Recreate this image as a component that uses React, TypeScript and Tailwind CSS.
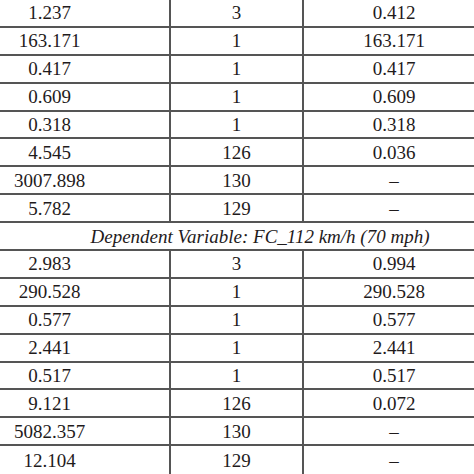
import React from 'react';

type Row = [string, string, string];

const first: Row[] = [
  ['1.237', '3', '0.412'],
  ['163.171', '1', '163.171'],
  ['0.417', '1', '0.417'],
  ['0.609', '1', '0.609'],
  ['0.318', '1', '0.318'],
  ['4.545', '126', '0.036'],
  ['3007.898', '130', '–'],
  ['5.782', '129', '–'],
];

const second: Row[] = [
  ['2.983', '3', '0.994'],
  ['290.528', '1', '290.528'],
  ['0.577', '1', '0.577'],
  ['2.441', '1', '2.441'],
  ['0.517', '1', '0.517'],
  ['9.121', '126', '0.072'],
  ['5082.357', '130', '–'],
  ['12.104', '129', '–'],
];

const DataRow = ({ row, last }: { row: Row; last?: boolean }) => (
  <div
    className={`grid grid-cols-[169px_133px_172px] h-[27.9px] ${last ? '' : 'border-b-2 border-[#555]'}`}
  >
    <div className="flex items-center justify-center pr-[70px]">{row[0]}</div>
    <div className="flex items-center justify-center border-l-2 border-[#555]">{row[1]}</div>
    <div className="flex items-center justify-center pl-[10px] border-l-2 border-[#555]">{row[2]}</div>
  </div>
);

const App = () => {
  return (
    <div
      className="w-[474px] h-[474px] overflow-hidden bg-white text-[#1f1b1c] text-[19px] leading-none"
      style={{ fontFamily: '"Liberation Serif", "DejaVu Serif", serif' }}
    >
      {first.map((r, i) => (
        <DataRow key={`a${i}`} row={r} />
      ))}
      <div className="h-[27.9px] flex items-center justify-center pl-[46px] border-b-2 border-[#555] italic">
        Dependent Variable: FC_112 km/h (70 mph)
      </div>
      {second.map((r, i) => (
        <DataRow key={`b${i}`} row={r} last={i === second.length - 1} />
      ))}
    </div>
  );
};

export default App;
